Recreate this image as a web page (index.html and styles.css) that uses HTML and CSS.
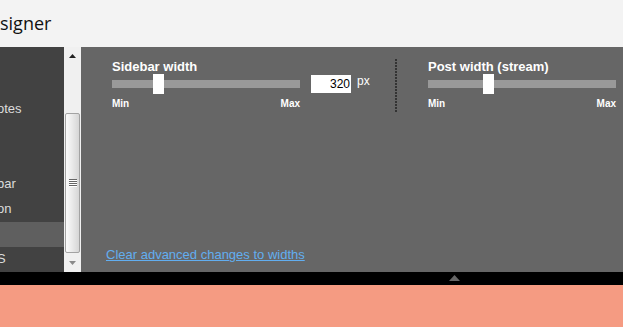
FILE: index.html
```html
<!DOCTYPE html>
<html lang="en">
<head>
<meta charset="utf-8">
<title>Designer</title>
<link rel="stylesheet" href="styles.css">
</head>
<body>
<header class="header">signer</header>
<div class="workspace">
  <nav class="sidebar">
    <ul class="nav-list">
      <li class="nav-item">&nbsp;</li>
      <li class="nav-item">&nbsp;</li>
      <li class="nav-item">otes</li>
      <li class="nav-item">&nbsp;</li>
      <li class="nav-item">&nbsp;</li>
      <li class="nav-item">bar</li>
      <li class="nav-item">on</li>
      <li class="nav-item nav-item-active">&nbsp;</li>
      <li class="nav-item">S</li>
    </ul>
  </nav>
  <div class="scrollbar">
    <div class="sb-btn sb-up">
      <svg width="7" height="4" viewBox="0 0 7 4"><polygon points="0,4 3.5,0 7,4" fill="#222"/></svg>
    </div>
    <div class="sb-thumb">
      <svg width="8" height="8" viewBox="0 0 8 8">
        <rect x="0" y="0" width="8" height="1" fill="#666"/>
        <rect x="0" y="2" width="8" height="1" fill="#666"/>
        <rect x="0" y="4" width="8" height="1" fill="#666"/>
        <rect x="0" y="6" width="8" height="1" fill="#666"/>
        <rect x="0" y="1" width="8" height="1" fill="#fff"/>
        <rect x="0" y="3" width="8" height="1" fill="#fff"/>
        <rect x="0" y="5" width="8" height="1" fill="#fff"/>
        <rect x="0" y="7" width="8" height="1" fill="#fff"/>
      </svg>
    </div>
    <div class="sb-spacer"></div>
    <div class="sb-btn sb-down">
      <svg width="7" height="4" viewBox="0 0 7 4"><polygon points="0,0 7,0 3.5,4" fill="#8a8a8a"/></svg>
    </div>
  </div>
  <main class="panel">
    <div class="controls">
      <section class="col col-sidebar">
        <div class="label">Sidebar width</div>
        <div class="slider-row">
          <div class="slider">
            <div class="track"></div>
            <div class="thumb thumb-sidebar"></div>
          </div>
          <input class="value-input" type="text" value="320">
          <span class="unit">px</span>
        </div>
        <div class="range-labels"><span>Min</span><span>Max</span></div>
      </section>
      <div class="divider"></div>
      <section class="col col-post">
        <div class="label">Post width (stream)</div>
        <div class="slider-row">
          <div class="slider">
            <div class="track"></div>
            <div class="thumb thumb-post"></div>
          </div>
        </div>
        <div class="range-labels"><span>Min</span><span>Max</span></div>
      </section>
    </div>
    <a class="reset-link" href="#">Clear advanced changes to widths</a>
  </main>
</div>
<div class="footer-bar">
  <svg class="footer-arrow" width="11" height="6" viewBox="0 0 11 6"><polygon points="0,6 5.5,0 11,6" fill="#666"/></svg>
</div>
<div class="salmon"></div>
</body>
</html>
```
FILE: styles.css
```css
html, body {
  margin: 0;
  padding: 0;
}
body {
  width: 623px;
  height: 327px;
  overflow: hidden;
  font-family: "Liberation Sans", Arial, sans-serif;
}
.header {
  box-sizing: border-box;
  height: 47px;
  padding-top: 11px;
  background: #f3f3f3;
  color: #111;
  font-family: "Open Sans", sans-serif;
  font-size: 18px;
  line-height: 24px;
  white-space: nowrap;
}
.workspace {
  display: flex;
  height: 225px;
}
.sidebar {
  width: 64px;
  flex: none;
  background: #424242;
  overflow: hidden;
}
.nav-list {
  list-style: none;
  margin: 0 0 0 -3px;
  padding: 0;
}
.nav-item {
  height: 25px;
  line-height: 24px;
  font-size: 13px;
  color: #dcdcdc;
  white-space: nowrap;
}
.nav-item-active {
  background: #5f5f5f;
}
.scrollbar {
  width: 17px;
  flex: none;
  background: #f0f0f0;
  display: flex;
  flex-direction: column;
  align-items: center;
}
.sb-btn {
  width: 17px;
  height: 17px;
  display: flex;
  justify-content: center;
}
.sb-up {
  align-items: center;
}
.sb-down {
  align-items: flex-start;
  padding-top: 0;
}
.sb-down svg {
  margin-top: 6px;
}
.sb-thumb {
  box-sizing: border-box;
  margin-top: 49px;
  width: 15px;
  height: 140px;
  border: 1px solid #a3a3a3;
  border-radius: 2px;
  background: linear-gradient(to right, #fbfbfb, #e9e9e9 50%, #d6d6d6);
  display: flex;
  align-items: center;
  justify-content: center;
}
.sb-spacer {
  flex: 1;
}
.panel {
  flex: 1;
  box-sizing: border-box;
  background: #666;
  display: flex;
  flex-direction: column;
  padding: 12px 0 10px 25px;
}
.controls {
  display: flex;
  align-items: flex-start;
  padding-left: 6px;
}
.col {
  padding-top: 1px;
}
.col-sidebar {
  width: 283px;
}
.col-post {
  width: 188px;
  margin-left: 31px;
}
.divider {
  width: 2px;
  height: 53px;
  background: repeating-linear-gradient(to bottom, #333 0 2px, transparent 2px 3px);
}
.label {
  font-weight: bold;
  font-size: 13px;
  line-height: 14px;
  color: #fff;
  white-space: nowrap;
}
.slider-row {
  display: flex;
  align-items: flex-start;
}
.slider {
  position: relative;
  width: 188px;
  height: 20px;
  flex: none;
}
.track {
  margin-top: 6px;
  height: 8px;
  background: #999;
}
.thumb {
  position: absolute;
  top: 0;
  width: 11px;
  height: 20px;
  background: #fff;
}
.thumb-sidebar {
  left: 41px;
}
.thumb-post {
  left: 55px;
}
.value-input {
  box-sizing: border-box;
  margin: 1px 0 0 11px;
  width: 40px;
  height: 18px;
  padding: 0 1px 0 0;
  border: none;
  outline: none;
  background: #fff;
  color: #000;
  font-family: "Liberation Sans", Arial, sans-serif;
  font-size: 12px;
  text-align: right;
}
.unit {
  margin-left: 6px;
  font-size: 12px;
  line-height: 14px;
  color: #fff;
}
.range-labels {
  display: flex;
  justify-content: space-between;
  width: 188px;
  margin-top: 4px;
  font-weight: bold;
  font-size: 10px;
  line-height: 12px;
  color: #fff;
}
.reset-link {
  margin-top: auto;
  align-self: flex-start;
  font-size: 13px;
  line-height: 15px;
  color: #62aef0;
  text-decoration: underline;
}
.footer-bar {
  height: 13px;
  background: #000;
  box-sizing: border-box;
  padding: 3px 0 0 449px;
}
.footer-arrow {
  display: block;
}
.salmon {
  height: 42px;
  background: #f59b82;
}
```
